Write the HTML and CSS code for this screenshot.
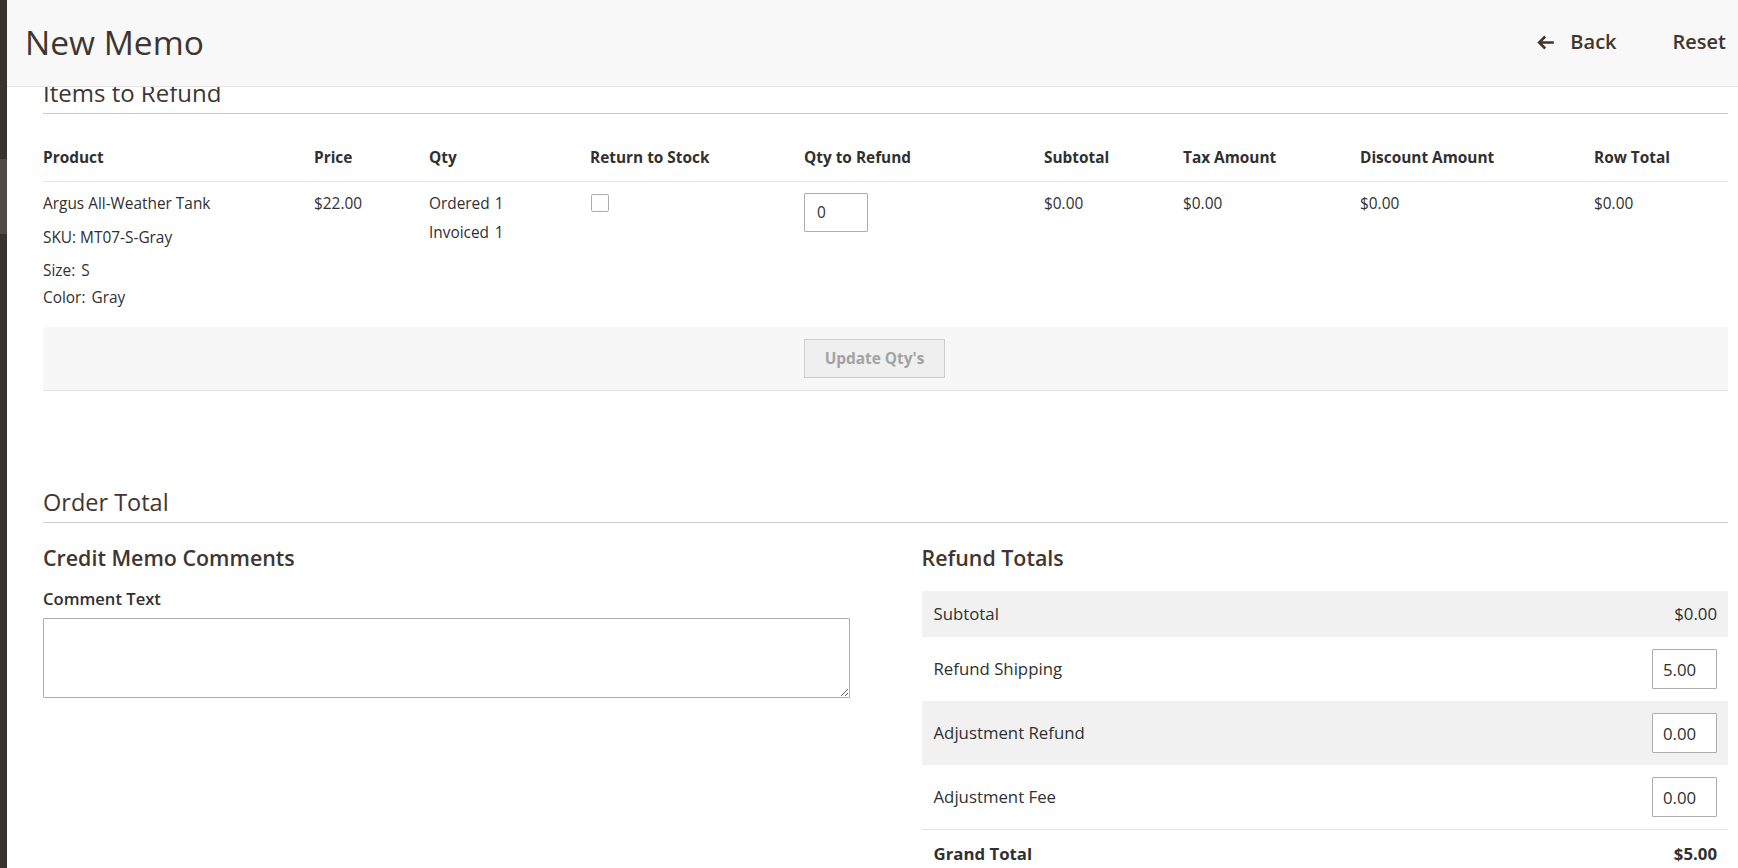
FILE: index.html
```html
<!DOCTYPE html>
<html lang="en">
<head>
<meta charset="utf-8">
<title>New Memo</title>
<link rel="stylesheet" href="styles.css">
</head>
<body>
<div class="layout">
  <aside class="menu"><div class="menu-active"></div></aside>
  <div class="page">
    <header class="page-header">
      <h1 class="page-title">New Memo</h1>
      <nav class="page-actions">
        <button class="action action-back" type="button">
          <svg class="back-icon" width="17" height="15" viewBox="0 0 17 15" aria-hidden="true"><path d="M16.8 7.5H2.4M8.2 1.5 2.2 7.5 8.2 13.5" fill="none" stroke="#41362f" stroke-width="2.6" stroke-linejoin="miter"/></svg>
          <span>Back</span>
        </button>
        <button class="action action-reset" type="button">Reset</button>
      </nav>
    </header>

    <main class="content">
      <section class="section">
        <h2 class="section-title items-title">Items to Refund</h2>
        <table class="items">
          <colgroup>
            <col style="width:271px"><col style="width:115px"><col style="width:161px"><col style="width:214px"><col style="width:240px"><col style="width:139px"><col style="width:177px"><col style="width:234px"><col style="width:134px">
          </colgroup>
          <thead>
            <tr>
              <th>Product</th><th>Price</th><th>Qty</th><th>Return to Stock</th><th>Qty to Refund</th><th>Subtotal</th><th>Tax Amount</th><th>Discount Amount</th><th>Row Total</th>
            </tr>
          </thead>
          <tbody>
            <tr class="item-row">
              <td>
                <div class="product-name">Argus All-Weather Tank</div>
                <div class="product-sku">SKU: MT07-S-Gray</div>
                <dl class="product-options">
                  <div class="option"><dt>Size:</dt><dd>S</dd></div>
                  <div class="option"><dt>Color:</dt><dd>Gray</dd></div>
                </dl>
              </td>
              <td>$22.00</td>
              <td>
                <div class="qty-table">
                  <span>Ordered</span><span>1</span>
                  <span>Invoiced</span><span>1</span>
                </div>
              </td>
              <td><input class="checkbox" type="checkbox"></td>
              <td><input class="input qty-input" type="text" value="0"></td>
              <td>$0.00</td>
              <td>$0.00</td>
              <td>$0.00</td>
              <td>$0.00</td>
            </tr>
          </tbody>
          <tfoot>
            <tr class="items-footer">
              <td colspan="4"></td>
              <td colspan="5"><button class="update-btn" type="button" disabled>Update Qty's</button></td>
            </tr>
          </tfoot>
        </table>
      </section>

      <section class="section order-total">
        <h2 class="section-title">Order Total</h2>
        <div class="columns">
          <div class="column">
            <h3 class="column-title">Credit Memo Comments</h3>
            <label class="field-label" for="comment">Comment Text</label>
            <textarea id="comment" class="textarea"></textarea>
          </div>
          <div class="column">
            <h3 class="column-title">Refund Totals</h3>
            <table class="totals">
              <tbody>
                <tr class="shaded"><td>Subtotal</td><td class="amount">$0.00</td></tr>
                <tr><td>Refund Shipping</td><td class="amount"><input class="input total-input" type="text" value="5.00"></td></tr>
                <tr class="shaded"><td>Adjustment Refund</td><td class="amount"><input class="input total-input" type="text" value="0.00"></td></tr>
                <tr><td>Adjustment Fee</td><td class="amount"><input class="input total-input" type="text" value="0.00"></td></tr>
                <tr class="grand"><td>Grand Total</td><td class="amount">$5.00</td></tr>
              </tbody>
            </table>
          </div>
        </div>
      </section>
    </main>
  </div>
</div>
</body>
</html>
```

FILE: styles.css
```css
* { box-sizing: border-box; }

html, body {
  margin: 0;
  padding: 0;
  height: 100%;
  overflow: hidden;
  background: #ffffff;
}

body {
  font-family: "Open Sans", "Liberation Sans", sans-serif;
  font-size: 15.4px;
  line-height: 22px;
  color: #303030;
}

.layout {
  display: flex;
  height: 100vh;
}

.menu {
  width: 7px;
  flex: 0 0 7px;
  background: #373330;
}

.menu-active {
  margin-top: 159px;
  height: 75px;
  background: #514b47;
}

.page {
  flex: 1 1 auto;
  min-width: 0;
  display: flex;
  flex-direction: column;
}

.page-header {
  position: sticky;
  top: 0;
  z-index: 5;
  height: 87px;
  flex: 0 0 87px;
  background: #f8f8f8;
  border-bottom: 1px solid #e3e3e3;
  display: flex;
  justify-content: space-between;
  align-items: flex-start;
  padding: 0 12px 0 18px;
}

.page-title {
  margin: 0;
  padding-top: 22px;
  font-size: 33.5px;
  line-height: 40px;
  font-weight: 400;
  color: #41362f;
}

.page-actions {
  display: flex;
  align-items: center;
  gap: 57px;
  padding-top: 30px;
}

.action {
  display: flex;
  align-items: center;
  gap: 16px;
  border: 0;
  background: none;
  padding: 0;
  font-family: inherit;
  font-size: 20px;
  line-height: 24px;
  font-weight: 600;
  color: #41362f;
  cursor: pointer;
}

.action-back { margin-right: -1px; }

.back-icon { display: block; }

.content {
  margin-top: -9px;
  padding: 0 10px 0 36px;
}

.section-title {
  margin: 0;
  font-size: 23.5px;
  line-height: 30px;
  font-weight: 400;
  color: #41362f;
  padding-bottom: 5px;
  border-bottom: 1px solid #cccccc;
}

.items-title { font-size: 24px; }

.items {
  width: 1685px;
  margin-top: 23px;
  border-collapse: collapse;
  table-layout: fixed;
}

.items th {
  text-align: left;
  font-weight: 700;
  padding: 10px 10px 12px 0;
  border-bottom: 1px solid #e3e3e3;
  vertical-align: top;
}

.items td {
  padding: 10px 10px 16px 0;
  vertical-align: top;
}

.item-row td { padding-top: 11px; }

.product-sku { margin-top: 12px; }

.product-options {
  margin: 8px 0 0;
}

.option {
  display: flex;
  gap: 6px;
  line-height: 27px;
}

.option dt, .option dd { margin: 0; }

.qty-table {
  display: grid;
  grid-template-columns: max-content max-content;
  column-gap: 5px;
  row-gap: 7px;
}

.checkbox {
  appearance: none;
  -webkit-appearance: none;
  display: block;
  width: 18px;
  height: 18px;
  margin: 1px 0 0 1px;
  border: 1px solid #adadad;
  border-radius: 2px;
  background: #ffffff;
}

.input {
  display: block;
  height: 39px;
  border: 1px solid #adadad;
  border-radius: 1px;
  background: #ffffff;
  font-family: inherit;
  font-size: 15.4px;
  color: #303030;
  padding: 0 12px;
}

.qty-input {
  width: 64px;
  margin-top: 0;
}

.items-footer td {
  background: #f7f7f7;
  padding: 12px 0;
  border-bottom: 1px solid #e3e3e3;
}

.update-btn {
  display: block;
  width: 141px;
  height: 39px;
  border: 1px solid #cccccc;
  background: #efefef;
  color: #a3a3a3;
  font-family: inherit;
  font-size: 15.4px;
  font-weight: 700;
  padding: 0;
}

.order-total { margin-top: 96px; }

.columns {
  display: grid;
  grid-template-columns: 1fr 1fr;
  column-gap: 72px;
}

.column-title {
  margin: 22px 0 0;
  font-size: 21.4px;
  line-height: 26px;
  font-weight: 600;
  color: #41362f;
}

.field-label {
  display: block;
  margin-top: 17px;
  font-size: 16.6px;
  font-weight: 600;
  color: #303030;
}

.textarea {
  display: block;
  width: 100%;
  height: 80px;
  margin-top: 8px;
  border: 1px solid #adadad;
  border-radius: 1px;
  resize: vertical;
  font-family: inherit;
  font-size: 15.4px;
}

.totals {
  width: 100%;
  margin-top: 20px;
  border-collapse: collapse;
  font-size: 16.8px;
}

.totals td {
  padding: 12px 11px 12px 12px;
  vertical-align: middle;
}

.totals tr.shaded td { background: #f1f1f1; }

.totals .amount { text-align: right; }

.total-input {
  width: 65px;
  height: 40px;
  margin-left: auto;
  text-align: left;
  padding: 0 10px;
  font-size: 16.8px;
}

.totals tr.grand td {
  border-top: 1px solid #e3e3e3;
  padding-top: 13px;
  font-weight: 700;
}
```
